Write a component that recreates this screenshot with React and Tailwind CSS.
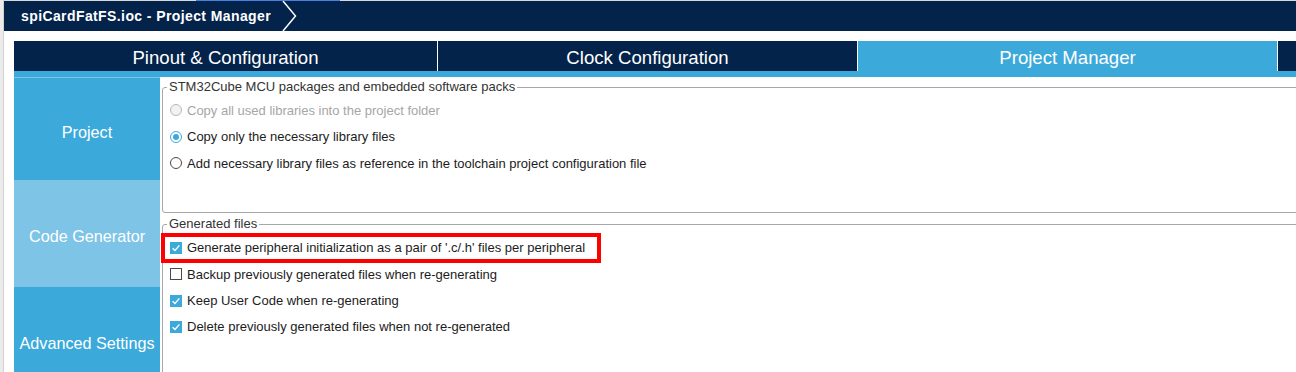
import React from 'react';

const NAVY = 'bg-[#03234b]';

function Radio({ state }) {
  // state: 'disabled' | 'checked' | 'off'
  if (state === 'disabled') {
    return <span className="w-[12px] h-[12px] rounded-full border border-[#b8b8b8] bg-[#f2f2f2] shrink-0" />;
  }
  if (state === 'checked') {
    return (
      <span className="w-[12px] h-[12px] rounded-full border border-[#3ca9db] bg-white shrink-0 flex items-center justify-center">
        <span className="w-[6px] h-[6px] rounded-full bg-[#3ca9db]" />
      </span>
    );
  }
  return <span className="w-[12px] h-[12px] rounded-full border border-[#4a4a4a] bg-white shrink-0" />;
}

function Check({ checked }) {
  if (!checked) {
    return <span className="w-[12px] h-[12px] border border-[#4a4a4a] bg-white shrink-0" />;
  }
  return (
    <span className="w-[12px] h-[12px] bg-[#3ca9db] shrink-0 flex items-center justify-center">
      <svg width="10" height="10" viewBox="0 0 10 10">
        <path d="M1.6 5.2 L4 7.4 L8.4 2.4" fill="none" stroke="white" strokeWidth="1.4" />
      </svg>
    </span>
  );
}

const radios = [
  { label: 'Copy all used libraries into the project folder', state: 'disabled' },
  { label: 'Copy only the necessary library files', state: 'checked' },
  { label: 'Add necessary library files as reference in the toolchain project configuration file', state: 'off' },
];

const checks = [
  { label: "Generate peripheral initialization as a pair of '.c/.h' files per peripheral", checked: true, marked: true },
  { label: 'Backup previously generated files when re-generating', checked: false },
  { label: 'Keep User Code when re-generating', checked: true },
  { label: 'Delete previously generated files when not re-generated', checked: true },
];

export default function App() {
  return (
    <div className="flex h-[372px] w-full overflow-hidden bg-white font-['Liberation_Sans',Arial,sans-serif]">
      {/* window frame on the left */}
      <div className="w-[3px] bg-[#ebebeb] shrink-0" />
      <div className="w-px bg-[#d2d2d2] shrink-0" />

      <div className="flex-1 flex flex-col min-w-0">
        {/* top 1px line */}
        <div className="h-px flex shrink-0 bg-[#d9d9d9]">
          <div className="w-[192px]" />
          <div className="w-[144px] bg-[#4a7fdf]" />
        </div>

        {/* title bar */}
        <div className={`h-[30px] ${NAVY} flex items-center shrink-0`}>
          <span className="ml-[17px] pt-[1px] text-white font-bold text-[14px] tracking-[0.4px]">
            spiCardFatFS.ioc - Project Manager
          </span>
          <svg width="16" height="30" viewBox="0 0 16 30" className="ml-[11px]">
            <path d="M1 0 L13.5 15 L1 30" fill="none" stroke="white" strokeWidth="1.5" />
          </svg>
        </div>

        <div className="h-[10px] shrink-0" />

        {/* tabs */}
        <div className={`ml-[10px] h-[30px] flex ${NAVY} shrink-0 text-white text-[18.6px]`}>
          <div className="w-[423px] flex items-center justify-center pt-[3px]">Pinout &amp; Configuration</div>
          <div className="w-px bg-white" />
          <div className="w-[419px] flex items-center justify-center pt-[3px]">Clock Configuration</div>
          <div className="w-px bg-white" />
          <div className="w-[419px] flex items-center justify-center pt-[3px] bg-[#3ca9db]">Project Manager</div>
          <div className="w-px bg-white" />
          <div className="flex-1" />
        </div>
        <div className="ml-[10px] h-[6px] bg-[#3ca9db] shrink-0" />

        {/* body */}
        <div className="ml-[10px] flex flex-1 min-h-0">
          <div className="w-[146px] shrink-0 flex flex-col text-white text-[16.2px]">
            <div className="h-[104px] shrink-0 bg-[#3ca9db] border-t border-[#7dc4e7] border-b flex items-center justify-center pt-[6px]">
              Project
            </div>
            <div className="h-[106px] shrink-0 bg-[#7dc4e7] flex items-center justify-center pt-[5px]">Code Generator</div>
            <div className="h-[110px] shrink-0 bg-[#3ca9db] flex items-center justify-center pt-[2px]">Advanced Settings</div>
          </div>

          <div className="flex-1 min-w-0 pl-[2px] overflow-hidden text-[13px] text-[#1c1c1c]">
            <fieldset className="mt-[2px] h-[134px] -mr-[10px] border border-[#a8a8a8] rounded-[3px] pl-[7px]">
              <legend className="-ml-[3px] px-[2px] leading-[16px] text-[#333]">
                STM32Cube MCU packages and embedded software packs
              </legend>
              <div className="flex flex-col pt-[2px]">
                {radios.map((r) => (
                  <div key={r.label} className="h-[26.5px] flex items-center gap-[5px]">
                    <Radio state={r.state} />
                    <span className={r.state === 'disabled' ? 'text-[#a6a6a6]' : ''}>{r.label}</span>
                  </div>
                ))}
              </div>
            </fieldset>

            <fieldset className="mt-[3px] h-[200px] -mr-[10px] border border-[#a8a8a8] rounded-[3px] pl-[7px]">
              <legend className="-ml-[3px] px-[2px] leading-[16px] text-[#333]">Generated files</legend>
              <div className="flex flex-col pt-[3px]">
                {checks.map((c) => (
                  <div key={c.label} className="relative h-[26.3px] flex items-center gap-[5px]">
                    <Check checked={c.checked} />
                    <span>{c.label}</span>
                    {c.marked && (
                      <div className="absolute left-[-9px] top-[-2px] w-[440px] h-[30px] border-[4px] border-[#ff0000] pointer-events-none" />
                    )}
                  </div>
                ))}
              </div>
            </fieldset>
          </div>
        </div>
      </div>
    </div>
  );
}
